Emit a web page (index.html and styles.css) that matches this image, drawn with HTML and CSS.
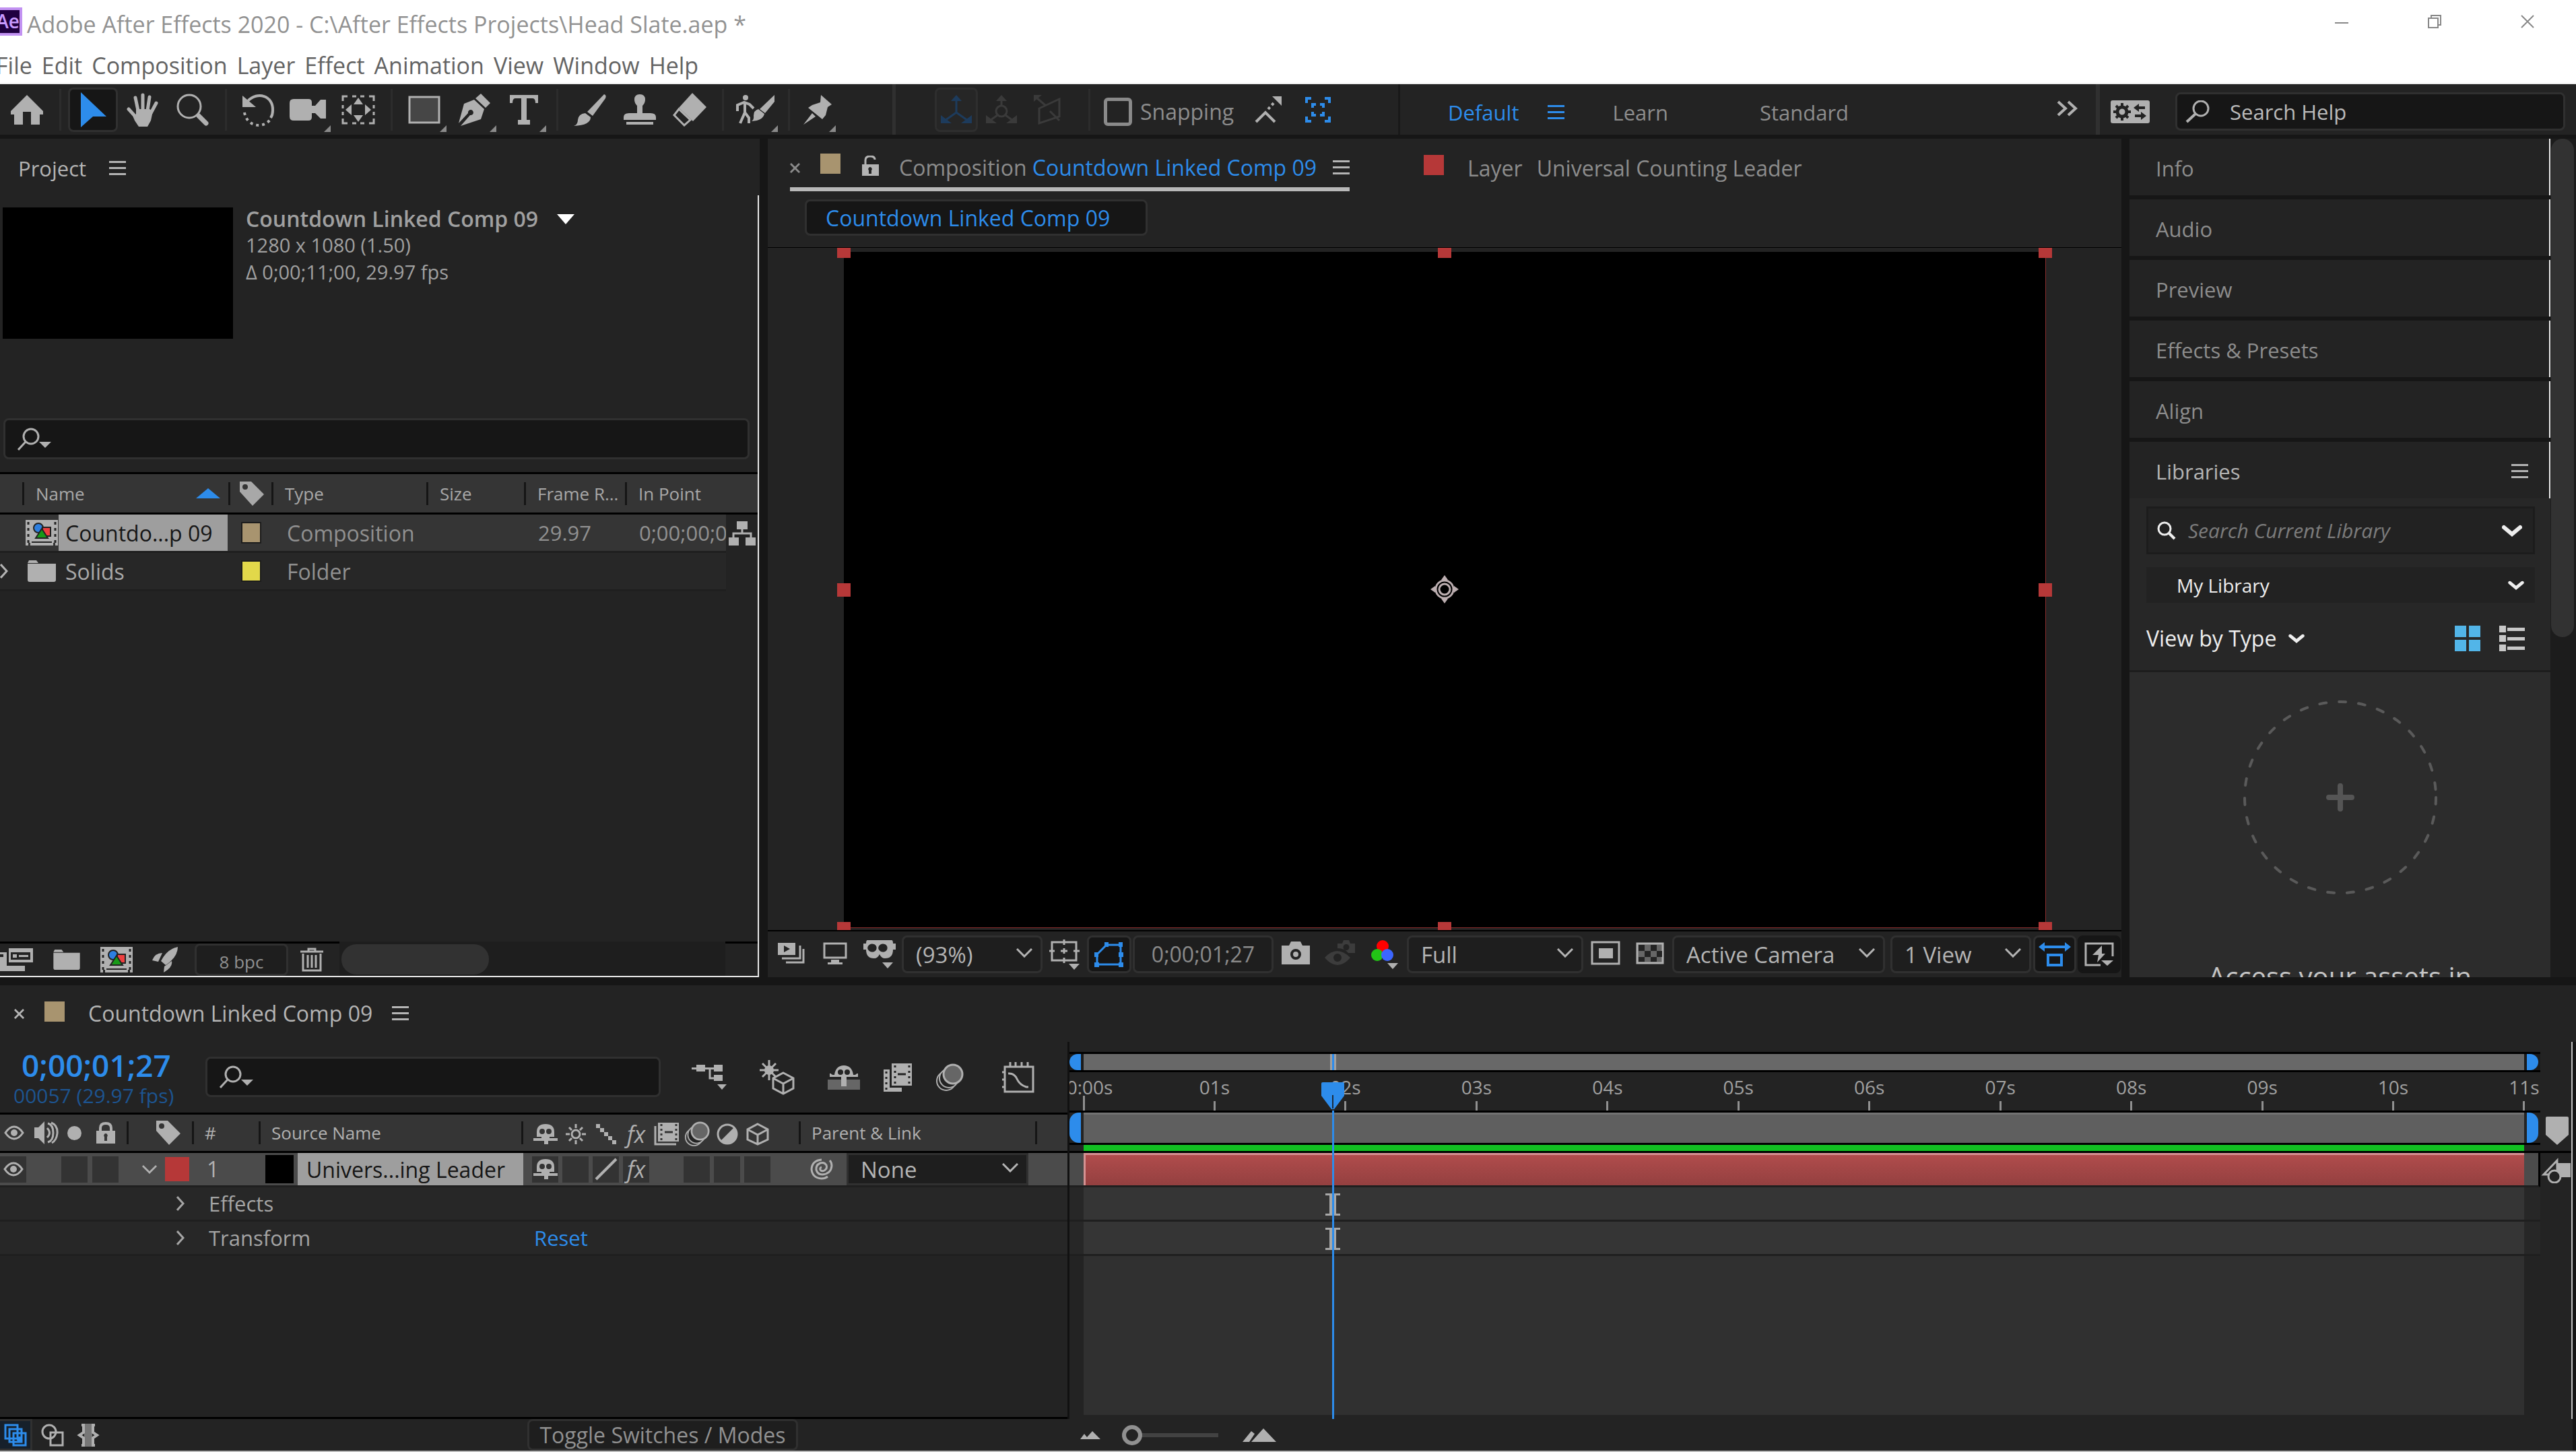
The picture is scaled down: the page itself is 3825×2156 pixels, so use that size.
FILE: index.html
```html
<!DOCTYPE html>
<html lang="en">
<head>
<meta charset="utf-8">
<title>Adobe After Effects 2020</title>
<link rel="stylesheet" href="styles.css">
</head>
<body>
<svg class="sprite" aria-hidden="true">
  <symbol id="home" viewBox="0 0 48 44"><path fill="currentColor" d="M24 0 48 24v5h-5v15H30V25H18v19H5V29H0v-5z"/></symbol>
  <symbol id="select" viewBox="0 0 38 52"><path fill="#2d8ceb" d="M0 0 38 36H18L0 52z"/></symbol>
  <symbol id="hand" viewBox="0 0 48 50"><path fill="none" stroke="currentColor" stroke-width="5" stroke-linecap="round" d="M17 26 13 7M24 25V3M31 26l3-20M36 30l8-15M13 35 3 24"/><path fill="currentColor" d="M14 24h20l5 3-3 14-5 9H18l-6-9-5-12 7 3z"/></symbol>
  <symbol id="zoom" viewBox="0 0 50 50"><circle cx="20" cy="20" r="17" fill="none" stroke="currentColor" stroke-width="3"/><path stroke="currentColor" stroke-width="7" stroke-linecap="round" d="m34 34 11 11"/></symbol>
  <symbol id="rotate" viewBox="0 0 48 50"><path fill="none" stroke="currentColor" stroke-width="4" d="M8 12C22-3 46 4 45 26c0 5-1 8-3 11"/><path fill="currentColor" d="M0 4v17h20z"/><path fill="none" stroke="currentColor" stroke-width="4" stroke-dasharray="4 5" d="M3 29c3 20 26 25 38 11"/></symbol>
  <symbol id="camera" viewBox="0 0 56 36"><path fill="currentColor" d="M6 2h22q5 0 5 5v5h5l8-9h8v28h-8l-8-8h-5v6q0 5-5 5H6q-6 0-6-6V8q0-6 6-6z"/></symbol>
  <symbol id="panbehind" viewBox="0 0 50 44"><path fill="none" stroke="currentColor" stroke-width="3" d="M2 9V2h7M41 2h7v7M48 35v7h-7M9 42H2v-7M16 2h6M28 2h6M16 42h6M28 42h6M2 15v5M2 25v5M48 15v5M48 25v5"/><path fill="currentColor" d="m25 4 7 10H18zM25 40l7-10H18zM6 22l9-8v16zM44 22l-9-8v16z"/></symbol>
  <symbol id="rect" viewBox="0 0 48 42"><path fill="#464646" stroke="currentColor" stroke-width="3" d="M2 2h44v38H2z"/></symbol>
  <symbol id="pen" viewBox="0 0 48 48"><path fill="currentColor" d="m34 0 14 14-7 7-15-14zM24 9l15 14-5 15L4 48l14-16a4 4 0 1 0-3-3L1 44l8-29z"/></symbol>
  <symbol id="type" viewBox="0 0 42 44"><path fill="currentColor" d="M0 0h42v12h-4q0-7-4-7h-9v32h5v7H12v-7h5V5H8q-4 0-4 7H0z"/></symbol>
  <symbol id="brush" viewBox="0 0 48 48"><path fill="currentColor" d="M45 1q4 1 2 6L28 33l-8-6zM17 29l8 6q0 12-25 13 6-2 6-9 1-9 11-10z"/></symbol>
  <symbol id="stamp" viewBox="0 0 48 46"><path fill="currentColor" d="M24 0q8 0 8 8 0 5-4 9v11h12q8 0 8 6v4H0v-4q0-6 8-6h12V17q-4-4-4-9 0-8 8-8zM4 41h40v4H4z"/></symbol>
  <symbol id="eraser" viewBox="0 0 50 50"><path fill="currentColor" d="m29 0 21 21-20 21L9 22z"/><path fill="none" stroke="currentColor" stroke-width="3" d="M9 24 2 33l15 15 9-8z"/></symbol>
  <symbol id="roto" viewBox="0 0 58 44"><circle cx="14" cy="4" r="4" fill="currentColor"/><path fill="none" stroke="currentColor" stroke-width="4" d="M2 24v-9l10-4 8 3 6 6M13 12v14l-7 16M13 26l6 8v8"/><path fill="currentColor" d="M57 0v10L43 27l-8-6zM33 21l9 7q-2 10-19 11 4-3 3-8 0-8 7-10z"/></symbol>
  <symbol id="pin" viewBox="0 0 42 44"><path fill="currentColor" d="m26 0 16 14-6 4-3 12-5 6L7 19l6-4 12-4zM13 27l5 5L0 44z"/></symbol>
  <symbol id="corner" viewBox="0 0 10 10"><path fill="currentColor" d="M10 0v10H0z"/></symbol>
  <symbol id="axis" viewBox="0 0 46 44"><path fill="none" stroke="currentColor" stroke-width="3" d="M23 4v22M23 26 6 38M23 26l17 12"/><path fill="currentColor" d="m23 0 8 9H15zM0 30v12h16zM46 30v12H30z"/></symbol>
  <symbol id="axis2" viewBox="0 0 46 44"><circle cx="23" cy="24" r="8" fill="none" stroke="currentColor" stroke-width="3"/><path fill="none" stroke="currentColor" stroke-width="3" d="M23 4v12M17 30 6 38M29 30l11 8"/><path fill="currentColor" d="m23 0 8 9H15zM0 30v12h16zM46 30v12H30z"/></symbol>
  <symbol id="axis3" viewBox="0 0 42 44"><path fill="none" stroke="currentColor" stroke-width="3" d="M4 4l14 12M8 20 38 6v26L8 42zM24 24l14 14"/><path fill="currentColor" d="M0 0h12L0 10z"/></symbol>
  <symbol id="snap" viewBox="0 0 40 40"><path fill="none" stroke="currentColor" stroke-width="4" d="M2 38l14-14 14 14"/><path fill="none" stroke="currentColor" stroke-width="4" stroke-dasharray="4 4" d="m20 19 10-11"/><path fill="currentColor" d="M26 0h14v14z"/></symbol>
  <symbol id="snapbox" viewBox="0 0 38 38"><path fill="none" stroke="currentColor" stroke-width="4" d="M2 9V2h7M29 2h7v7M36 29v7h-7M9 36H2v-7M11 16v-5h5M22 11h5v5M27 22v5h-5M16 27h-5v-5"/></symbol>
  <symbol id="menu" viewBox="0 0 25 22"><path fill="currentColor" d="M0 0h25v3H0zM0 9h25v3H0zM0 18h25v3H0z"/></symbol>
  <symbol id="more" viewBox="0 0 32 24"><path fill="none" stroke="currentColor" stroke-width="4" d="m2 2 11 10L2 22M17 2l11 10-11 10"/></symbol>
  <symbol id="sync" viewBox="0 0 58 34"><rect width="58" height="34" rx="3" fill="currentColor"/><circle cx="17" cy="17" r="7" fill="none" stroke="#232323" stroke-width="5"/><path stroke="#232323" stroke-width="4" d="M17 4v5M17 25v5M4 17h5M25 17h5M8 8l3 3M23 23l3 3M26 8l-3 3M11 23l-3 3"/><path fill="#232323" d="m34 11 8-6v4h9v4h-9v4zM53 23l-8-6v4h-9v4h9v4z"/></symbol>
  <symbol id="find" viewBox="0 0 36 34"><circle cx="23" cy="12" r="11" fill="none" stroke="currentColor" stroke-width="3"/><path stroke="currentColor" stroke-width="4" d="M15 20 2 32"/></symbol>
  <symbol id="finddrop" viewBox="0 0 50 34"><circle cx="20" cy="13" r="11" fill="none" stroke="currentColor" stroke-width="3"/><path stroke="currentColor" stroke-width="3" d="M12 21 1 33"/><path fill="currentColor" d="M32 21h18l-9 9z"/></symbol>
  <symbol id="lens" viewBox="0 0 28 28"><circle cx="11" cy="11" r="9" fill="none" stroke="currentColor" stroke-width="3"/><path stroke="currentColor" stroke-width="4" d="m18 18 8 8"/></symbol>
  <symbol id="chev" viewBox="0 0 24 14"><path fill="none" stroke="currentColor" stroke-width="3" d="m1 1 11 11L23 1"/></symbol>
  <symbol id="chevbold" viewBox="0 0 30 18"><path fill="none" stroke="currentColor" stroke-width="6" stroke-linecap="round" d="m3 4 12 10L27 4"/></symbol>
  <symbol id="chevright" viewBox="0 0 12 22"><path fill="none" stroke="currentColor" stroke-width="3" d="m1 1 9 10-9 10"/></symbol>
  <symbol id="close" viewBox="0 0 16 16"><path stroke="currentColor" stroke-width="3" d="m1 1 14 14M15 1 1 15"/></symbol>
  <symbol id="lockopen" viewBox="0 0 25 30"><path fill="currentColor" d="M0 13h25v17H0z"/><path fill="none" stroke="currentColor" stroke-width="3" d="M5 13V7q0-6 7-6t7 5"/><path fill="#232323" d="M12 17a3 3 0 0 1 2 5v5h-4v-5a3 3 0 0 1 2-5z"/></symbol>
  <symbol id="lock" viewBox="0 0 28 32"><path fill="currentColor" d="M0 13h28v19H0z"/><path fill="none" stroke="currentColor" stroke-width="4" d="M6 14V9q0-7 8-7t8 7v5"/><path fill="#353535" d="M14 17a3 3 0 0 1 2 5v6h-4v-6a3 3 0 0 1 2-5z"/></symbol>
  <symbol id="tag" viewBox="0 0 36 36"><path fill="currentColor" fill-rule="evenodd" d="M0 0h17l19 19-17 17L0 15zM8 4a4 4 0 1 0 0 8 4 4 0 0 0 0-8z"/></symbol>
  <symbol id="comp" viewBox="0 0 48 38"><path fill="currentColor" d="M0 0h48v38h-4v-4h-3v4H7v-4H4v4H0z"/><path stroke="#232323" stroke-width="3" stroke-dasharray="4 5" d="M4 3v32M44 3v32"/><path stroke="#232323" stroke-width="2" d="M9 33h30"/><circle cx="19" cy="12" r="7" fill="#2d7fe0" stroke="#222" stroke-width="2"/><path fill="#ee4040" stroke="#222" stroke-width="2" d="M25 11h12v13H25z"/><path fill="#189a18" stroke="#222" stroke-width="2" d="m24 13 9 14H15z"/></symbol>
  <symbol id="folder" viewBox="0 0 42 32"><path fill="currentColor" d="M2 0h11l3 4H0zM0 5h42v24q0 3-3 3H3q-3 0-3-3z"/></symbol>
  <symbol id="flow" viewBox="0 0 40 36"><path fill="currentColor" d="M12 0h16v12H12zM0 24h15v12H0zM25 24h15v12H25z"/><path fill="none" stroke="currentColor" stroke-width="3" d="M20 12v6M7 24v-6h26v6"/></symbol>
  <symbol id="interpret" viewBox="0 0 49 34"><path fill="currentColor" fill-rule="evenodd" d="M13 0h36v21H13zM16 6v11h29V6zM19 9h6v5h-6zM28 10h14v3H28z"/><path fill="currentColor" d="M0 6h10v20h27v8H0zM0 9v4h5V9z"/></symbol>
  <symbol id="rocket" viewBox="0 0 38 38"><path fill="currentColor" d="M38 0q0 15-18 27l-7-6Q22 3 38 0zM15 9 9 22 0 20Q4 9 15 9zM29 21q2 9-12 17l1-9z"/></symbol>
  <symbol id="trash" viewBox="0 0 34 36"><path fill="none" stroke="currentColor" stroke-width="3" d="M0 6h34M12 6V2h10v4M4 9v25h26V9M11 11v19M17 11v19M23 11v19"/></symbol>
  <symbol id="previews" viewBox="0 0 40 31"><path fill="currentColor" fill-rule="evenodd" d="M0 0h26v18H0zM9 4v10l9-5z"/><path fill="none" stroke="currentColor" stroke-width="3" d="M6 23h27V4M12 29h26V9"/></symbol>
  <symbol id="monitor" viewBox="0 0 36 33"><path fill="none" stroke="currentColor" stroke-width="3" d="M2 2h32v21H2z"/><path fill="currentColor" d="M12 26h12v4h5v3H7v-3h5z"/></symbol>
  <symbol id="mask3d" viewBox="0 0 48 44"><path fill="currentColor" fill-rule="evenodd" d="M6 0h36q2 0 2 5h4v9h-4q0 13-12 13-5 0-8-6-3 6-8 6Q4 27 4 14H0V5h4q0-5 2-5zM16 6a7 6 0 1 0 0 11 6 6 0 0 0 0-11zM32 6a7 6 0 1 0 0 11 6 6 0 0 0 0-11zM28 33h16l-8 9z"/></symbol>
  <symbol id="gridopt" viewBox="0 0 46 46"><path fill="none" stroke="currentColor" stroke-width="3" d="M4 4h36v27H4zM22 0v8M22 27v8M0 17h8M36 17h9M17 17h10M22 13v8"/><path fill="currentColor" d="M29 36h16l-8 9z"/></symbol>
  <symbol id="maskpath" viewBox="0 0 44 37"><path fill="none" stroke="#2d8ceb" stroke-width="3" d="M4 33V18L18 4h21v29z"/><path fill="#2d8ceb" d="M15 0h6v7h-6zM36 0h6v7h-6zM0 15h6v7H0zM36 15h7v7h-7zM0 30h7v7H0zM36 30h7v7h-7z"/></symbol>
  <symbol id="snapshot" viewBox="0 0 42 34"><path fill="currentColor" fill-rule="evenodd" d="M0 6h11l3-6h14l3 6h11v28H0zM21 11a8 8 0 1 0 0 16 8 8 0 0 0 0-16zM21 15a4 4 0 1 1 0 8 4 4 0 0 1 0-8z"/></symbol>
  <symbol id="showsnap" viewBox="0 0 46 38"><path fill="currentColor" fill-rule="evenodd" d="M19 5h7l2-5h8l2 5h7v14H35q-5-7-16-7zM32 6a4 4 0 1 0 0 9 4 4 0 0 0 0-9zM0 26q18-20 38 0-19 22-38 0zM19 20a6 6 0 1 0 0 12 6 6 0 0 0 0-12z"/></symbol>
  <symbol id="channels" viewBox="0 0 40 44"><circle cx="17" cy="9" r="9" fill="#f00"/><circle cx="9" cy="22" r="9" fill="#22c316"/><circle cx="24" cy="22" r="9" fill="#3c66ff"/><path fill="currentColor" d="M24 34h16l-8 9z"/></symbol>
  <symbol id="roi" viewBox="0 0 44 36"><path fill="none" stroke="currentColor" stroke-width="3" d="M2 2h40v32H2z"/><path fill="currentColor" d="M12 11h21v15H12z"/></symbol>
  <symbol id="checker" viewBox="0 0 42 33"><path fill="#666" stroke="currentColor" stroke-width="3" d="M2 2h38v29H2z"/><path fill="#232323" d="M4 4h9v9H4zM22 4h9v9h-9zM13 13h9v9h-9zM31 13h8v9h-8zM4 22h9v7H4zM22 22h9v7h-9z"/></symbol>
  <symbol id="par" viewBox="0 0 48 36"><path fill="none" stroke="#2d8ceb" stroke-width="4" d="M6 7h36M14 19h20v15H14z"/><path fill="#2d8ceb" d="M0 7 9 0v14zM48 7l-9-7v14z"/></symbol>
  <symbol id="fast" viewBox="0 0 44 36"><path fill="none" stroke="currentColor" stroke-width="3" d="M24 34H2V2h40v19"/><path fill="currentColor" d="M26 5v12h5L19 30l2-11h-9zM25 27h18l-9 8z"/></symbol>
  <symbol id="tree" viewBox="0 0 52 38"><path fill="currentColor" d="M0 4h7V0h13v4h13V0h13v10H33V7H20v3H7V7H0zM33 15h13v9H33zM38 29h14l-7 8z"/><path fill="none" stroke="currentColor" stroke-width="3" d="M27 5v15h7"/></symbol>
  <symbol id="draft3d" viewBox="0 0 52 52"><path stroke="currentColor" stroke-width="3" d="M14 0v30M0 15h28M4 5l20 20M24 5 4 25"/><circle cx="14" cy="15" r="7" fill="currentColor"/><path fill="none" stroke="currentColor" stroke-width="3" d="m35 19 15 8v15l-15 8-15-8V27zM20 27l15 8 15-8M35 35v15"/></symbol>
  <symbol id="shyall" viewBox="0 0 48 36"><path fill="#666" d="M0 21h48v15H0z"/><path fill="currentColor" fill-rule="evenodd" d="M3 17V12h2q0 2 5 2Q12 0 24 0t14 14q5 0 5-2h2v5h-17v14h-8V17zM19 6a4 4 0 1 0 0 8 4 4 0 0 0 0-8zM29 6a4 4 0 1 0 0 8 4 4 0 0 0 0-8z"/></symbol>
  <symbol id="shy" viewBox="0 0 36 30"><path fill="currentColor" fill-rule="evenodd" d="M0 21h12v-2H5V12Q5 0 18 0t13 12v7h-7v2h12v4H22v5h-6v-5H0zM13 7a4 4 0 1 0 0 8 4 4 0 0 0 0-8zM23 7a4 4 0 1 0 0 8 4 4 0 0 0 0-8z"/></symbol>
  <symbol id="sun" viewBox="0 0 30 30"><circle cx="15" cy="15" r="6" fill="none" stroke="currentColor" stroke-width="3"/><path stroke="currentColor" stroke-width="3" d="M15 0v6M15 24v6M0 15h6M24 15h6M5 5l4 4M21 21l4 4M25 5l-4 4M9 21l-4 4"/></symbol>
  <symbol id="quality" viewBox="0 0 30 30"><path fill="currentColor" d="M0 0h6v6H0zM6 6h6v6H6zM12 12h6v6h-6zM18 18h6v6h-6zM24 24h6v6h-6z"/></symbol>
  <symbol id="slash" viewBox="0 0 34 34"><path stroke="currentColor" stroke-width="4" d="M2 32 32 2"/></symbol>
  <symbol id="film" viewBox="0 0 38 34"><path fill="none" stroke="currentColor" stroke-width="3" d="M2 5v27h31"/><path fill="currentColor" d="M6 0h31v28H6z"/><path stroke="#353535" stroke-width="3" stroke-dasharray="3 4" d="M11 2v25M33 2v25"/><path stroke="#353535" stroke-width="3" d="M16 14h12"/></symbol>
  <symbol id="blend" viewBox="0 0 42 42"><path fill="currentColor" d="M12 0h30v33H12zM0 9h9v27h18v6H0z"/><path stroke="#232323" stroke-width="3" stroke-dasharray="3 5" d="M17 3v28M38 3v28M4 12v28"/><path stroke="#232323" stroke-width="3" d="M21 16h12"/></symbol>
  <symbol id="mblur" viewBox="0 0 42 42"><circle cx="16" cy="26" r="14" fill="none" stroke="currentColor" stroke-width="2"/><circle cx="20" cy="22" r="14" fill="#232323" stroke="currentColor" stroke-width="2"/><circle cx="26" cy="16" r="14" fill="#666" stroke="currentColor" stroke-width="3"/></symbol>
  <symbol id="graph" viewBox="0 0 48 46"><path fill="none" stroke="currentColor" stroke-width="3" d="M4 7h42v37H4zM9 17q9-1 13 8t14 12h3M12 0v6M20 0v6M29 0v6M38 0v6M0 15h4M0 26h4M0 37h4"/></symbol>
  <symbol id="eye" viewBox="0 0 30 22"><path fill="none" stroke="currentColor" stroke-width="3" d="M2 11Q8 2 15 2t13 9q-6 9-13 9T2 11z"/><circle cx="15" cy="11" r="5" fill="currentColor"/></symbol>
  <symbol id="speaker" viewBox="0 0 36 34"><path fill="currentColor" d="M0 9h6l9-9v34l-9-9H0z"/><path fill="none" stroke="currentColor" stroke-width="3" d="M19 10q7 7 0 14M20 3q8 2 8 14t-8 14M25 2q10 4 9 16-1 10-8 14"/></symbol>
  <symbol id="adjust" viewBox="0 0 32 32"><circle cx="16" cy="16" r="14" fill="none" stroke="currentColor" stroke-width="3"/><path fill="currentColor" d="M26 6A14 14 0 1 1 6 26z"/></symbol>
  <symbol id="cube" viewBox="0 0 34 34"><path fill="none" stroke="currentColor" stroke-width="3" d="m17 2 15 8v15l-15 7-15-7V10zM2 10l15 8 15-8M17 18v14"/></symbol>
  <symbol id="spiral" viewBox="0 0 36 32"><path fill="none" stroke="currentColor" stroke-width="3" d="M17 13q-3 1-2 4 2 3 6 1 5-3 3-8-3-5-9-3-7 3-6 10 2 7 9 7 13-1 14-13 0-5-3-8M17 2Q3 3 2 16q1 13 15 14 5 0 9-3"/></symbol>
  <symbol id="marker" viewBox="0 0 34 42"><path fill="currentColor" d="M2 0h30q2 0 2 2v25L17 42 0 27V2q0-2 2-2z"/></symbol>
  <symbol id="compbtn" viewBox="0 0 44 38"><path fill="currentColor" d="M24 8h20v21H24z"/><path fill="#232323" stroke="currentColor" stroke-width="3" d="M24 4v21H4z"/><circle cx="20" cy="28" r="9" fill="#232323" stroke="currentColor" stroke-width="3"/></symbol>
  <symbol id="ibeam" viewBox="0 0 22 33"><path fill="currentColor" d="M0 0h22v3h-6v27h6v3H0v-3h6V3H0z"/></symbol>
  <symbol id="panes" viewBox="0 0 34 34"><path fill="#16202b" stroke="#2d8ceb" stroke-width="3" d="M2 2h18v20H2zM8 8h18v19H8zM14 14h18v18H14z"/><circle cx="23" cy="23" r="4" fill="#2d8ceb"/></symbol>
  <symbol id="modes" viewBox="0 0 34 34"><circle cx="12" cy="12" r="10" fill="none" stroke="currentColor" stroke-width="3"/><path fill="none" stroke="currentColor" stroke-width="3" d="M14 13h18v19H14z"/></symbol>
  <symbol id="inout" viewBox="0 0 36 34"><path fill="#777" d="M12 0h12v34H12z"/><path fill="none" stroke="currentColor" stroke-width="4" d="M8 2h3v11l-6 4 6 4v11H8M28 2h-3v11l6 4-6 4v11h3"/></symbol>
  <symbol id="hillsmall" viewBox="0 0 30 12"><path fill="currentColor" d="m0 12 6-8 4 5 8-9 12 12z"/></symbol>
  <symbol id="hillbig" viewBox="0 0 50 20"><path fill="currentColor" d="M0 20 13 4l5 4-8 12zM13 20 31 0l19 20z"/></symbol>
  <symbol id="gridview" viewBox="0 0 38 38"><path fill="#52b5e8" d="M0 0h17v17H0zM21 0h17v17H21zM0 21h17v17H0zM21 21h17v17H21z"/></symbol>
  <symbol id="listview" viewBox="0 0 38 38"><path fill="#c8c8c8" d="M0 0h10v10H0zM12 3h26v5H12zM0 14h10v10H0zM12 17h26v5H12zM0 28h10v10H0zM12 31h26v5H12z"/></symbol>
  <symbol id="anchor" viewBox="0 0 42 42"><circle cx="21" cy="21" r="13" fill="none" stroke="#bcaeb0" stroke-width="3"/><circle cx="21" cy="21" r="8" fill="none" stroke="#bcaeb0" stroke-width="3"/><path fill="#bcaeb0" d="m21 0 5 7H16zM21 42l5-7H16zM0 21l7-5v10zM42 21l-7-5v10z"/></symbol>
  <symbol id="dropzone" viewBox="0 0 290 290"><circle cx="145" cy="145" r="142" fill="none" stroke="#5a5a5a" stroke-width="4" stroke-linecap="round" stroke-dasharray="10 19"/><path stroke="#555" stroke-width="8" stroke-linecap="round" d="M128 145h34M145 128v34"/></symbol>
</svg>

<div class="app">
  <header class="window">
    <div class="titlebar">
      <span class="logo">Ae</span>
      <h1>Adobe After Effects 2020 - C:\After Effects Projects\Head Slate.aep *</h1>
      <div class="winbtns">
        <button aria-label="Minimize"><svg width="20" height="20"><path d="M0 12h20" stroke="#888" stroke-width="2"/></svg></button>
        <button aria-label="Restore"><svg width="20" height="20"><path d="M1 5h14v14H1zM5 5V1h14v14h-4" fill="none" stroke="#888" stroke-width="2"/></svg></button>
        <button aria-label="Close"><svg width="20" height="20"><path d="m1 1 18 18M19 1 1 19" stroke="#888" stroke-width="2"/></svg></button>
      </div>
    </div>
    <nav class="menubar">
      <button>File</button><button>Edit</button><button>Composition</button><button>Layer</button><button>Effect</button><button>Animation</button><button>View</button><button>Window</button><button>Help</button>
    </nav>
  </header>

  <div class="toolbar">
    <div class="tools">
      <button class="tool" aria-label="Home"><svg width="48" height="44"><use href="#home"/></svg></button>
      <i class="sep"></i>
      <button class="tool active" aria-label="Selection"><svg width="38" height="52"><use href="#select"/></svg></button>
      <button class="tool" aria-label="Hand"><svg width="48" height="50"><use href="#hand"/></svg></button>
      <button class="tool" aria-label="Zoom"><svg width="50" height="50"><use href="#zoom"/></svg></button>
      <i class="sep"></i>
      <button class="tool" aria-label="Rotate"><svg width="48" height="50"><use href="#rotate"/></svg></button>
      <button class="tool" aria-label="Camera"><svg width="56" height="36"><use href="#camera"/></svg><svg class="corner" width="10" height="10"><use href="#corner"/></svg></button>
      <button class="tool" aria-label="Pan behind"><svg width="50" height="44"><use href="#panbehind"/></svg></button>
      <i class="sep"></i>
      <button class="tool" aria-label="Rectangle"><svg width="48" height="42"><use href="#rect"/></svg><svg class="corner" width="10" height="10"><use href="#corner"/></svg></button>
      <button class="tool" aria-label="Pen"><svg width="48" height="48"><use href="#pen"/></svg><svg class="corner" width="10" height="10"><use href="#corner"/></svg></button>
      <button class="tool" aria-label="Type"><svg width="42" height="44"><use href="#type"/></svg><svg class="corner" width="10" height="10"><use href="#corner"/></svg></button>
      <i class="sep"></i>
      <button class="tool" aria-label="Brush"><svg width="48" height="48"><use href="#brush"/></svg></button>
      <button class="tool" aria-label="Clone stamp"><svg width="48" height="46"><use href="#stamp"/></svg></button>
      <button class="tool" aria-label="Eraser"><svg width="50" height="50"><use href="#eraser"/></svg></button>
      <i class="sep"></i>
      <button class="tool" aria-label="Roto brush"><svg width="58" height="44"><use href="#roto"/></svg><svg class="corner" width="10" height="10"><use href="#corner"/></svg></button>
      <i class="sep"></i>
      <button class="tool narrow" aria-label="Puppet pin"><svg width="42" height="44"><use href="#pin"/></svg><svg class="corner" width="10" height="10"><use href="#corner"/></svg></button>
    </div>
    <div class="options">
      <button class="tool axis on" aria-label="Local axis"><svg width="46" height="44"><use href="#axis"/></svg></button>
      <button class="tool axis" aria-label="World axis"><svg width="46" height="44"><use href="#axis2"/></svg></button>
      <button class="tool axis" aria-label="View axis"><svg width="42" height="44"><use href="#axis3"/></svg></button>
      <i class="sep"></i>
      <label class="check"><input type="checkbox">Snapping</label>
      <button class="tool" aria-label="Snap to edges"><svg width="40" height="40"><use href="#snap"/></svg></button>
      <button class="tool blue" aria-label="Snap to features"><svg width="38" height="38"><use href="#snapbox"/></svg></button>
    </div>
    <nav class="workspaces">
      <button class="blue">Default</button>
      <button class="blue ham" aria-label="Workspace menu"><svg width="25" height="22"><use href="#menu"/></svg></button>
      <button>Learn</button>
      <button class="std">Standard</button>
      <button class="overflow" aria-label="More workspaces"><svg width="32" height="24"><use href="#more"/></svg></button>
    </nav>
    <div class="help">
      <button aria-label="Sync settings"><svg width="58" height="34"><use href="#sync"/></svg></button>
      <label class="field"><svg width="36" height="34"><use href="#find"/></svg><input type="search" placeholder="Search Help" aria-label="Search Help"></label>
    </div>
  </div>

  <div class="workspace">
    <section class="panel project">
      <div class="tabs"><h2>Project</h2><button aria-label="Panel menu"><svg width="25" height="22"><use href="#menu"/></svg></button></div>
      <div class="projbody">
        <div class="info">
          <div class="thumb"></div>
          <div class="meta">
            <h3>Countdown Linked Comp 09 <svg width="26" height="15"><path d="M0 0h26L13 15z" fill="#fff"/></svg></h3>
            <p>1280 x 1080 (1.50)</p>
            <p>Δ 0;00;11;00, 29.97 fps</p>
          </div>
        </div>
        <label class="field search"><svg width="50" height="34"><use href="#finddrop"/></svg><input type="search" aria-label="Search project"></label>
        <table class="items">
          <colgroup><col class="c0"><col class="c1"><col class="c2"><col class="c3"><col class="c4"><col class="c5"><col class="c6"><col></colgroup>
          <thead>
            <tr><th><span>&nbsp;</span></th><th><span class="namehead">Name <svg width="36" height="15"><path d="M0 15h36L18 0z" fill="#2d8ceb"/></svg></span></th><th><span class="taghead"><svg width="36" height="36"><use href="#tag"/></svg></span></th><th><span>Type</span></th><th><span>Size</span></th><th><span>Frame R...</span></th><th colspan="2"><span class="last">In Point</span></th></tr>
          </thead>
          <tbody>
            <tr class="sel"><td></td><td><div class="name"><svg width="48" height="38"><use href="#comp"/></svg><b>Countdo...p 09</b></div></td><td><i class="sw tan"></i></td><td>Composition</td><td></td><td class="num">29.97</td><td class="num clip">0;00;00;00</td><td class="flow"><svg width="40" height="36"><use href="#flow"/></svg></td></tr>
            <tr><td class="tw"><svg width="12" height="22"><use href="#chevright"/></svg></td><td><div class="name"><svg width="42" height="32"><use href="#folder"/></svg><b>Solids</b></div></td><td><i class="sw yellow"></i></td><td>Folder</td><td></td><td></td><td></td><td class="flow"></td></tr>
          </tbody>
        </table>
        <div class="projfoot">
          <button class="f1" aria-label="Interpret footage"><svg width="49" height="34"><use href="#interpret"/></svg></button>
          <button class="f2" aria-label="New folder"><svg width="40" height="30"><use href="#folder"/></svg></button>
          <button class="f3" aria-label="New composition"><svg width="50" height="38"><use href="#comp"/></svg></button>
          <button class="f4" aria-label="Project settings"><svg width="38" height="38"><use href="#rocket"/></svg></button>
          <button class="bpc">8 bpc</button>
          <button class="f5" aria-label="Delete"><svg width="34" height="36"><use href="#trash"/></svg></button>
          <div class="hscroll"><i></i></div>
        </div>
      </div>
    </section>

    <section class="panel composition">
      <div class="comptabs">
        <div class="tab current">
          <button aria-label="Close tab"><svg width="15" height="15"><use href="#close"/></svg></button>
          <i class="chip tan"></i>
          <svg class="bright" width="25" height="30"><use href="#lockopen"/></svg>
          <span class="kind">Composition <em>Countdown Linked Comp 09</em></span>
          <button class="bright" aria-label="Panel menu"><svg width="25" height="22"><use href="#menu"/></svg></button>
        </div>
        <div class="tab"><i class="chip red"></i><span>Layer</span><span>Universal Counting Leader</span></div>
      </div>
      <div class="crumbs"><button>Countdown Linked Comp 09</button></div>
      <div class="viewer">
        <div class="canvas">
          <i class="h tl"></i><i class="h tc"></i><i class="h tr"></i><i class="h ml"></i><i class="h mr"></i><i class="h bl"></i><i class="h bc"></i><i class="h br"></i>
          <svg class="anchor" width="42" height="42"><use href="#anchor"/></svg>
        </div>
      </div>
      <div class="compfoot">
        <button class="ic w62" aria-label="Always preview this view"><svg width="40" height="31"><use href="#previews"/></svg></button>
        <button class="ic w66" aria-label="Primary viewer"><svg width="36" height="33"><use href="#monitor"/></svg></button>
        <button class="ic w66" aria-label="VR"><svg class="low" width="48" height="44"><use href="#mask3d"/></svg></button>
        <div class="drop w208"><select aria-label="Magnification"><option>(93%)</option></select><svg width="24" height="14"><use href="#chev"/></svg></div>
        <button class="ic w66" aria-label="Grid and guides"><svg class="low" width="46" height="46"><use href="#gridopt"/></svg></button>
        <button class="box w66" aria-label="Mask visibility"><svg width="44" height="37"><use href="#maskpath"/></svg></button>
        <button class="box time">0;00;01;27</button>
        <button class="ic w66" aria-label="Take snapshot"><svg width="42" height="34"><use href="#snapshot"/></svg></button>
        <button class="ic w66 dim" aria-label="Show snapshot"><svg width="46" height="38"><use href="#showsnap"/></svg></button>
        <button class="ic w66" aria-label="Channels"><svg class="low" width="40" height="44"><use href="#channels"/></svg></button>
        <div class="drop w260"><select aria-label="Resolution"><option>Full</option></select><svg width="24" height="14"><use href="#chev"/></svg></div>
        <button class="ic w66" aria-label="Region of interest"><svg width="44" height="36"><use href="#roi"/></svg></button>
        <button class="ic w66" aria-label="Transparency grid"><svg width="42" height="33"><use href="#checker"/></svg></button>
        <div class="drop w316"><select aria-label="3D view"><option>Active Camera</option></select><svg width="24" height="14"><use href="#chev"/></svg></div>
        <div class="drop w208 gap"><select aria-label="View layout"><option>1 View</option></select><svg width="24" height="14"><use href="#chev"/></svg></div>
        <button class="box w62 gap2" aria-label="Pixel aspect ratio"><svg width="48" height="36"><use href="#par"/></svg></button>
        <button class="box w62 plain" aria-label="Fast previews"><svg width="44" height="36"><use href="#fast"/></svg></button>
      </div>
    </section>

    <aside class="side">
      <div class="stack">
        <button class="acc">Info</button>
        <button class="acc">Audio</button>
        <button class="acc">Preview</button>
        <button class="acc">Effects &amp; Presets</button>
        <button class="acc">Align</button>
        <div class="acc lib"><h2>Libraries</h2><button aria-label="Panel menu"><svg width="25" height="22"><use href="#menu"/></svg></button></div>
        <div class="libctl">
          <label class="libsearch"><svg width="28" height="28"><use href="#lens"/></svg><input type="search" placeholder="Search Current Library" aria-label="Search Current Library"><svg width="30" height="18"><use href="#chevbold"/></svg></label>
          <div class="libpick"><select aria-label="Library"><option>My Library</option></select><svg width="24" height="14"><use href="#chevbold"/></svg></div>
          <div class="libview"><button>View by Type <svg width="24" height="14"><use href="#chevbold"/></svg></button><span class="grow"></span><button aria-label="Grid view"><svg width="38" height="38"><use href="#gridview"/></svg></button><button aria-label="List view"><svg width="38" height="38"><use href="#listview"/></svg></button></div>
        </div>
        <div class="drops"><svg width="290" height="290"><use href="#dropzone"/></svg><p>Access your assets in</p></div>
      </div>
      <div class="vscroll"><i></i></div>
    </aside>
  </div>

  <section class="timeline">
    <div class="tltabs">
      <button aria-label="Close tab"><svg width="15" height="15"><use href="#close"/></svg></button>
      <i class="chip tan"></i>
      <h2>Countdown Linked Comp 09</h2>
      <button class="bright" aria-label="Panel menu"><svg width="25" height="22"><use href="#menu"/></svg></button>
    </div>
    <div class="tlmain">
      <div class="outline">
        <div class="tlctl">
          <div class="clock"><strong>0;00;01;27</strong><small>00057 (29.97 fps)</small></div>
          <label class="field"><svg width="50" height="34"><use href="#finddrop"/></svg><input type="search" aria-label="Search layers"></label>
          <button class="k1" aria-label="Mini-flowchart"><svg width="52" height="38"><use href="#tree"/></svg></button>
          <button class="k2" aria-label="Draft 3D"><svg width="52" height="52"><use href="#draft3d"/></svg></button>
          <button class="k2" aria-label="Hide shy layers"><svg width="48" height="36"><use href="#shyall"/></svg></button>
          <button class="k3" aria-label="Frame blending"><svg width="42" height="42"><use href="#blend"/></svg></button>
          <button class="k3" aria-label="Motion blur"><svg width="42" height="42"><use href="#mblur"/></svg></button>
          <button class="k4" aria-label="Graph editor"><svg width="48" height="46"><use href="#graph"/></svg></button>
        </div>
        <div class="lrow lhead">
          <span class="hc n"><svg width="30" height="22"><use href="#eye"/></svg></span>
          <span class="hc n"><svg width="36" height="34"><use href="#speaker"/></svg></span>
          <span class="hc n"><i class="dot"></i></span>
          <span class="hc n s"><svg width="28" height="32"><use href="#lock"/></svg></span>
          <span class="hc s tagc"><svg width="36" height="36"><use href="#tag"/></svg></span>
          <span class="hc s">#</span>
          <span class="hc s">Source Name</span>
          <span class="hc s switches"><svg width="36" height="30"><use href="#shy"/></svg><svg width="30" height="30"><use href="#sun"/></svg><svg width="30" height="30"><use href="#quality"/></svg><i class="fx">fx</i><svg width="38" height="34"><use href="#film"/></svg><svg width="38" height="38"><use href="#mblur"/></svg><svg width="32" height="32"><use href="#adjust"/></svg><svg width="34" height="34"><use href="#cube"/></svg></span>
          <span class="hc s">Parent &amp; Link</span>
          <span class="hc"></span>
        </div>
        <div class="lrow layer">
          <span class="av"><svg width="30" height="22"><use href="#eye"/></svg></span><span></span><span class="av"></span><span class="av"></span>
          <span class="twirl"><svg width="22" height="13"><use href="#chev"/></svg><i class="red"></i></span>
          <span class="idx">1</span>
          <span class="src"><i></i><b>Univers...ing Leader</b></span>
          <span class="switches cells"><i><svg width="36" height="30"><use href="#shy"/></svg></i><i></i><i><svg width="34" height="34"><use href="#slash"/></svg></i><i class="fx">fx</i><i class="none"></i><i></i><i></i><i></i></span>
          <span class="parent"><svg width="36" height="32"><use href="#spiral"/></svg><span class="drop"><select aria-label="Parent"><option>None</option></select><svg width="24" height="14"><use href="#chev"/></svg></span></span>
          <span></span>
        </div>
        <div class="prop"><button><svg width="12" height="22"><use href="#chevright"/></svg><span>Effects</span></button></div>
        <div class="prop"><button><svg width="12" height="22"><use href="#chevright"/></svg><span>Transform</span></button><a href="#reset">Reset</a></div>
      </div>
      <div class="tracks">
        <div class="navig"><i class="cap l"></i><i class="bar"></i><i class="cap r"></i></div>
        <div class="ruler">
          <span class="zero"><b>0:00s</b></span><span><b>01s</b></span><span><b>02s</b></span><span><b>03s</b></span><span><b>04s</b></span><span><b>05s</b></span><span><b>06s</b></span><span><b>07s</b></span><span><b>08s</b></span><span><b>09s</b></span><span><b>10s</b></span><span><b>11s</b></span>
        </div>
        <div class="work"><i class="cap l"></i><i class="bar"></i><i class="cap r"></i></div>
        <div class="cache"><i></i></div>
        <div class="clip"><i></i></div>
        <div class="lane"><i></i></div>
        <div class="lane"><i></i></div>
        <div class="empty"><i></i></div>
        <div class="overlay"><div class="playhead" style="left:17.3%">
          <i class="navmark"></i>
          <svg class="head" width="34" height="40"><path fill="#2d8ceb" d="M2 0h30q2 0 2 2v18L19 40h-4L0 20V2q0-2 2-2z"/><path stroke="#1b2a3a" stroke-width="2" d="M17 19v20"/></svg>
          <svg class="beam b1" width="22" height="33"><use href="#ibeam"/></svg>
          <svg class="beam b2" width="22" height="33"><use href="#ibeam"/></svg>
          <i class="line"></i>
        </div></div>
      </div>
      <div class="gutter">
        <div class="g1"><svg width="34" height="42"><use href="#marker"/></svg></div>
        <div class="g2"><svg width="44" height="38"><use href="#compbtn"/></svg></div>
      </div>
    </div>
    <div class="tlfoot">
      <button class="pane" aria-label="Layer switches"><svg width="34" height="34"><use href="#panes"/></svg></button>
      <button class="md" aria-label="Transfer controls"><svg width="34" height="34"><use href="#modes"/></svg></button>
      <button class="io" aria-label="In and out"><svg width="36" height="34"><use href="#inout"/></svg></button>
      <button class="toggle">Toggle Switches / Modes</button>
      <svg class="hs" width="30" height="12"><use href="#hillsmall"/></svg>
      <input type="range" min="0" max="100" value="0" aria-label="Timeline zoom">
      <svg width="50" height="20"><use href="#hillbig"/></svg>
    </div>
  </section>
</div>
</body>
</html>
```
FILE: styles.css
```css
* { box-sizing: border-box; }
html, body { margin: 0; height: 100%; }
body {
  background: #161616;
  color: #b4b4b4;
  font: 31px/40px "Open Sans", "Noto Sans", sans-serif;
  overflow: hidden;
}
button, input, select { font: inherit; color: inherit; background: none; border: 0; padding: 0; margin: 0; outline: 0; border-radius: 0; }
button { display: flex; align-items: center; justify-content: center; white-space: nowrap; }
input { min-width: 0; width: 100%; }
input[type="search"] { appearance: none; }
select { appearance: none; width: 100%; }
svg { display: block; flex: none; }
h1, h2, h3, p { margin: 0; font: inherit; }
i, em { font-style: normal; }
i { display: block; }
.sprite { position: absolute; width: 0; height: 0; }
.app { display: grid; grid-template-rows: 125px 75px minmax(0, 1250fr) minmax(0, 704fr); height: 100vh; }

/* window chrome */
.window { background: #fff; color: #636363; font-size: 34px; border-bottom: 2px solid #eee; }
.titlebar { display: flex; align-items: center; height: 72px; color: #929292; }
.logo { width: 33px; height: 42px; margin: 0 7px 8px 0; background: #1f0040; border: 4px solid #c292f2; border-left: 0; color: #c99bff; font: 600 28px/32px "Open Sans", sans-serif; display: flex; justify-content: flex-end; overflow: hidden; }
.titlebar h1 { flex: 1; }
.winbtns { display: flex; margin: 0 3px 8px 0; }
.winbtns button { width: 138px; height: 60px; }
.menubar { display: flex; gap: 14px; height: 50px; margin-left: -6px; }

/* toolbar */
.toolbar { display: flex; background: #232323; color: #b0b0b0; }
.tools { display: flex; align-items: center; width: 1330px; padding-left: 3px; border-right: 5px solid #303030; }
.tool { width: 74px; height: 66px; position: relative; flex: none; }
.tool.narrow { width: 62px; }
.tool.active { background: #161616; border: 3px solid #303030; border-radius: 8px; padding-left: 2px; }
.corner { position: absolute; right: 4px; bottom: 0; color: #8a8a8a; }
.sep { width: 3px; height: 62px; background: #2c2c2c; margin: 0 10px 0 11px; flex: none; }
.options { display: flex; align-items: center; width: 749px; padding: 0 0 0 58px; border-right: 3px solid #191919; }
.axis { color: #3a3a3a; width: 69px; }
.axis.on { color: #1d3b5c; border: 3px solid #2e2e2e; border-radius: 8px; width: 64px; background: #262626; }
.options .sep { margin: 0 20px 0 26px; }
.check { display: flex; align-items: center; gap: 12px; color: #8c8c8c; padding: 6px 14px 0 0; font-size: 32px; }
.check input { appearance: none; width: 42px; height: 42px; border: 5px solid #8a8a8a; border-radius: 6px; flex: none; }
.workspaces { display: flex; align-items: center; flex: 1; padding: 14px 26px 6px 71px; color: #8c8c8c; border-right: 6px solid #303030; }
.blue { color: #2d8ceb; }
.ham { margin: 0 71px 0 43px; }
.std { margin-left: 136px; }
.overflow { margin: 0 0 12px auto; color: #b0b0b0; }
.help { display: flex; align-items: center; gap: 38px; width: 707px; padding: 6px 16px 0; }
.field { display: flex; align-items: center; flex: 1; background: #161616; border: 3px solid #303030; border-radius: 8px; color: #b0b0b0; }
.help .field { height: 57px; padding-left: 12px; gap: 30px; }
.help ::placeholder { color: #bababa; opacity: 1; }

/* workspace */
.workspace { display: grid; grid-template-columns: 1128px minmax(0, 1fr) 663px; gap: 12px; padding: 6px 0 0; min-height: 0; }
.panel { background: #232323; min-width: 0; min-height: 0; display: flex; flex-direction: column; }
.chip { width: 30px; height: 30px; flex: none; }
.tan { background: #a8946f; }
.red { background: #b63838; }
.yellow { background: #e2d84a; }
.bright { color: #b4b4b4; }

.tabs { display: flex; align-items: center; gap: 34px; height: 84px; padding: 3px 0 0 27px; flex: none; }
.projbody { flex: 1; display: flex; flex-direction: column; min-height: 0; border-right: 2px solid #e8e8e8; border-bottom: 2px solid #e8e8e8; margin-right: 1px; }
.info { display: flex; gap: 19px; padding: 16px 0 0 4px; height: 331px; }
.thumb { width: 342px; height: 195px; margin-top: 2px; background: #000; }
.meta { font-size: 29px; color: #a0a0a0; }
.meta h3 { display: flex; align-items: center; gap: 28px; font-size: 32px; font-weight: 600; line-height: 38px; }
.search { flex: none; height: 61px; margin: 0 12px 19px 5px; padding-left: 18px; gap: 10px; }
.items { table-layout: fixed; border-collapse: collapse; width: 100%; }
.c0 { width: 36px; } .c1 { width: 306px; } .c2 { width: 64px; } .c3 { width: 230px; } .c4 { width: 145px; } .c5 { width: 150px; } .c6 { width: 147px; }
.items th { height: 60px; padding: 0; background: #353535; border-top: 3px solid #000; border-bottom: 3px solid #000; font-size: 26px; font-weight: 400; text-align: left; color: #a8a8a8; }
.items th span { display: flex; align-items: center; height: 34px; padding-left: 17px; border-right: 3px solid #151515; white-space: nowrap; }
.items th .last { border: 0; }
.items th .namehead { justify-content: space-between; padding-right: 12px; }
.items th .taghead { padding-left: 14px; }
.items td { height: 57px; padding: 2px 0 0 20px; background: #272727; border-bottom: 3px solid #1f1f1f; color: #909090; font-size: 32px; white-space: nowrap; overflow: hidden; }
.items .sel td { background: #353535; }
.items td:nth-child(2) { padding: 0 4px 0 0; }
.items td:nth-child(3) { padding: 0 0 0 16px; }
.items td.tw { padding: 0; color: #b4b4b4; }
.items td.flow { background: #232323; padding: 0 0 0 4px; color: #b0b0b0; border: 0; }
.items td.num { font-size: 31px; padding: 0 0 0 18px; }
.name { display: flex; align-items: center; height: 54px; color: #b0b0b0; }
.name svg { margin-left: 1px; width: 50px; }
.name b { font-weight: 400; flex: 1; height: 54px; line-height: 56px; padding-left: 10px; color: #a8a8a8; }
.sel .name b { background: #9e9e9e; color: #161616; font-weight: 500; }
.sw { width: 30px; height: 32px; border: 2px solid #1c1c1c; }
.projfoot { margin-top: auto; display: flex; align-items: center; height: 51px; border-top: 3px solid #000; color: #b0b0b0; flex: none; }
.f2 { margin-left: 30px; } .f3 { margin-left: 29px; } .f4 { margin-left: 28px; }
.bpc { width: 139px; height: 48px; margin-left: 25px; border: 3px solid #303030; border-radius: 8px; background: #1e1e1e; font-size: 26px; color: #909090; padding-top: 6px; }
.f5 { margin-left: 18px; }
.hscroll { width: 573px; height: 51px; margin: -3px 0 0 24px; padding: 4px 3px 0; background: #1e1e1e; }
.hscroll i { width: 219px; height: 45px; border-radius: 22px; background: #323232; }

.comptabs { display: flex; gap: 110px; height: 78px; padding-left: 33px; flex: none; color: #8c8c8c; font-size: 32px; }
.tab { display: flex; align-items: center; gap: 21px; white-space: nowrap; height: 78px; padding-top: 10px; }
.tab .chip { margin: -10px 14px 0 0; }
.tab.current { border-bottom: 6px solid #b8b8b8; gap: 30px; padding-top: 14px; }
.current .chip { margin: -12px 2px 0 0; }
.current > svg { margin-top: -6px; }
.kind { margin-right: -6px; }
.tab em { color: #2d8ceb; }
.crumbs { height: 83px; padding: 12px 0 0 55px; flex: none; font-size: 32px; }
.crumbs button { height: 54px; padding: 2px 53px 0 28px; background: #161616; border: 3px solid #303030; border-radius: 8px; color: #2d8ceb; }
.viewer { flex: 1; min-height: 0; border-top: 1px solid #000; border-bottom: 2px solid #000; padding: 6px 112px 3px 113px; overflow: hidden; display: flex; background: #232323; }
.canvas { flex: 1; position: relative; background: #000; border-right: 1px solid #8a2c2c; border-bottom: 1px solid #8a2c2c; }
.h { position: absolute; width: 20px; height: 15px; margin: -8px 0 0 -10px; background: #b63838; }
.tl, .ml, .bl { left: 0; } .tc, .bc { left: 50%; } .tr, .mr, .br { left: 100%; }
.tl, .tc, .tr { top: 2px; } .ml, .mr { top: 50%; } .bl, .bc, .br { top: 100%; }
.ml, .mr { height: 20px; margin-top: -10px; }
.anchor { position: absolute; left: 50%; top: 50%; margin: -22px 0 0 -21px; }
.compfoot { display: flex; align-items: center; height: 68px; padding-left: 3px; flex: none; color: #b0b0b0; }
.ic, .box { height: 56px; flex: none; }
.ic svg { margin-bottom: 4px; }
.ic .low { margin-top: 2px; margin-bottom: 0; }
.w62 { width: 64px; } .w66 { width: 66px; } .w208 { width: 209px; } .w260 { width: 262px; } .w316 { width: 316px; }
.box { background: #161616; border: 3px solid #303030; border-radius: 8px; }
.plain { border-color: #161616; margin-left: 2px; }
.box.time { width: 209px; margin-left: 2px; background: #1e1e1e; color: #8a8a8a; font-size: 32px; }
.dim { color: #3c3c3c; }
.gap { margin-left: 8px; } .gap2 { margin-left: 3px; }
.drop { display: grid; align-items: center; flex: none; height: 56px; background: #1e1e1e; border: 3px solid #303030; border-radius: 8px; color: #b4b4b4; font-size: 33px; }
.drop > * { grid-area: 1 / 1; }
.drop select { padding: 2px 0 0 18px; height: 50px; }
.drop svg { justify-self: end; margin: 0 12px 4px 0; pointer-events: none; }

/* right-hand stack */
.side { display: flex; min-height: 0; }
.stack { flex: 1; display: flex; flex-direction: column; min-width: 0; min-height: 0; overflow: hidden; }
.acc { height: 84px; flex: none; margin-bottom: 6px; padding: 3px 0 0 39px; background: #232323; border-right: 2px solid #e8e8e8; color: #8c8c8c; justify-content: flex-start; }
.lib { display: flex; align-items: center; justify-content: space-between; padding-right: 31px; margin: 0; color: #b4b4b4; }
.libctl { background: #272727; padding: 12px 23px 0 25px; height: 258px; flex: none; border-bottom: 3px solid #1d1d1d; color: #eee; }
.libsearch { display: flex; align-items: center; gap: 18px; height: 71px; padding: 0 16px 0 13px; background: #222; border: 3px solid #1c1c1c; font-size: 30px; }
.libsearch ::placeholder { color: #7c7c7c; opacity: 1; font-style: italic; }
.libpick { display: grid; align-items: center; height: 53px; margin-top: 19px; background: #222; font-size: 28px; }
.libpick > * { grid-area: 1 / 1; }
.libpick select { padding-left: 45px; }
.libpick svg { justify-self: end; margin-right: 16px; }
.libview { display: flex; align-items: center; gap: 28px; font-size: 32px; height: 100px; padding: 6px 15px 0 0; }
.libview button { gap: 18px; }
.grow { flex: 1; }
.drops { flex: 1; min-height: 0; overflow: hidden; background: #2c2c2c; display: flex; flex-direction: column; align-items: center; padding-top: 41px; }
.drops p { margin-top: 94px; font-size: 40px; line-height: 54px; color: #c4c4c4; white-space: nowrap; flex: none; }
.vscroll { width: 38px; background: #1c1c1c; padding: 0 3px 0 1px; }
.vscroll i { height: 740px; border-radius: 17px; background: #323232; }

/* timeline */
.timeline { margin-top: 12px; background: #232323; display: flex; flex-direction: column; min-height: 0; border-bottom: 2px solid #bbb; }
.tltabs { display: flex; align-items: center; height: 84px; padding-left: 21px; flex: none; font-size: 32px; }
.tltabs .chip { margin: -6px 35px 0 30px; }
.tltabs h2 { margin-right: 29px; }
.tlmain { flex: 1; min-height: 0; display: grid; grid-template-columns: 1585px minmax(0, 1fr) 48px; border-right: 5px solid #161616; }
.outline { min-width: 0; border-bottom: 3px solid #000; }
.tlctl { display: flex; align-items: center; height: 105px; color: #b0b0b0; }
.clock { width: 305px; padding-left: 20px; color: #2d8ceb; }
.clock strong { display: block; font-size: 46px; line-height: 54px; font-weight: 600; padding-left: 12px; }
.clock small { display: block; font-size: 30px; line-height: 38px; color: #1d5490; }
.tlctl .field { flex: none; width: 676px; height: 60px; margin-bottom: 2px; padding-left: 18px; }
.k1 { margin-left: 46px; } .k2 { margin-left: 49px; } .k3 { margin-left: 35px; } .k4 { margin-left: 57px; }
.lrow { display: grid; grid-template-columns: 45px 46px 46px 54px 97px 99px 390px 412px 351px minmax(0, 1fr); align-items: center; }
.lhead { height: 60px; border-top: 3px solid #000; border-bottom: 3px solid #000; background: #353535; color: #b0b0b0; font-size: 26px; }
.hc { display: flex; align-items: center; height: 34px; padding-left: 16px; }
.n { padding-left: 6px; }
.s { border-right: 3px solid #151515; }
.tagc { padding-left: 41px; }
.dot { width: 21px; height: 21px; border-radius: 50%; background: #b0b0b0; margin-left: 3px; }
.switches { display: grid; grid-template-columns: repeat(8, 39px); gap: 6px; justify-items: center; align-items: center; padding-left: 13px; }
.fx { font: italic 34px/38px "Open Sans", sans-serif; color: #b0b0b0; }
.layer { height: 51px; background: #4b4b4b; border-bottom: 3px solid #1f1f1f; color: #b0b0b0; }
.av { width: 39px; height: 39px; background: #333; display: flex; align-items: center; justify-content: center; }
.twirl { display: flex; align-items: center; gap: 12px; padding-left: 20px; }
.twirl i { width: 36px; height: 36px; }
.idx { padding-left: 19px; font-size: 32px; }
.src { display: flex; align-items: center; gap: 6px; padding-left: 7px; }
.src i { width: 42px; height: 42px; background: #000; }
.src b { flex: 1; height: 48px; line-height: 50px; padding-left: 13px; font-size: 32px; font-weight: 500; background: #9e9e9e; color: #161616; }
.cells { justify-items: stretch; }
.cells i { height: 39px; background: #333; display: flex; justify-content: center; align-items: center; }
.cells .none { background: none; }
.parent { display: flex; align-items: center; gap: 18px; padding-left: 14px; }
.parent .drop { width: 270px; height: 48px; border-radius: 0; }
.parent select { height: 42px; }
.prop { display: flex; align-items: center; height: 51px; background: #272727; border-bottom: 3px solid #1f1f1f; color: #a4a4a4; padding-left: 262px; }
.prop button { width: 531px; gap: 36px; justify-content: flex-start; }
.prop a { color: #2d8ceb; text-decoration: none; }

.tracks { display: flex; flex-direction: column; min-width: 0; position: relative; border-left: 3px solid #111; padding-top: 15px; overflow: hidden; }
.tracks > div { flex: none; padding: 0 24px 0 21px; }
.navig { height: 30px; border-top: 3px solid #000; border-bottom: 3px solid #000; display: flex; background: #1b1b1b; }
.bar { flex: 1; background: #686868; }
.cap { background: #2d8ceb; width: 17px; }
.cap.l { border-radius: 14px 0 0 14px; margin: 0 4px 0 -21px; }
.cap.r { border-radius: 0 14px 14px 0; margin: 0 -21px 0 4px; }
.ruler { display: flex; justify-content: space-between; height: 57px; font-size: 28px; color: #a0a0a0; }
.ruler span { width: 0; display: flex; flex-direction: column; align-items: center; justify-content: space-between; padding-top: 4px; }
.ruler span::after { content: ""; width: 3px; height: 14px; background: #909090; flex: none; }
.ruler b { font-weight: 400; line-height: 36px; white-space: nowrap; }
.ruler .zero b { padding-left: 18px; }
.ruler .zero::after { height: 22px; margin-top: -6px; }
.work { height: 51px; border-top: 3px solid #000; border-bottom: 3px solid #000; display: flex; }
.work .bar { background: #5f5f5f; border-top: 3px solid #727272; }
.cache { height: 12px; border-bottom: 3px solid #000; }
.cache i { height: 9px; background: #12c022; }
.clip { height: 51px; background: #4b4b4b; border-bottom: 3px solid #1f1f1f; border-right: 3px solid #000; }
.items .clip { height: 57px; border-right: 0; }
.tracks > .clip { padding-right: 21px; }
.clip i { height: 48px; background: linear-gradient(#b04c4c, #944040); border: solid #d49292; border-width: 3px 0 0 3px; }
.lane { height: 51px; background: #272727; border-bottom: 3px solid #1f1f1f; }
.lane i { height: 48px; background: #353535; }
.tracks > .empty { flex: 1; padding-bottom: 6px; }
.empty i { height: 100%; background: #303030; }
.tracks > .overlay { position: absolute; inset: 0 24px 0 21px; padding: 0; pointer-events: none; }
.playhead { position: absolute; top: 0; bottom: 0; width: 0; color: #a8a8a8; }
.playhead > * { position: absolute; }
.navmark { top: 18px; left: -4px; width: 9px; height: 24px; border: solid #a0a0a0; border-width: 0 3px; background: #2d8ceb; }
.head { top: 60px; left: -17px; }
.line { top: 102px; bottom: 0; left: -1px; width: 3px; background: #2d8ceb; }
.beam { left: -11px; }
.b1 { top: 225px; } .b2 { top: 276px; }
.gutter { border-right: 2px solid #c0c0c0; color: #b0b0b0; }
.g1 { height: 165px; border-bottom: 3px solid #000; display: flex; align-items: flex-end; justify-content: center; padding: 0 0 9px 4px; }
.g2 { height: 51px; display: flex; align-items: center; justify-content: center; }
.tlfoot { display: flex; align-items: center; height: 47px; flex: none; color: #b0b0b0; border-right: 5px solid #161616; }
.pane { width: 48px; height: 47px; background: #16202b; border: 3px solid #303030; border-left: 0; }
.md { margin-left: 13px; }
.io { margin-left: 18px; }
.toggle { width: 402px; height: 47px; margin-left: 634px; background: #1e1e1e; border: 3px solid #303030; border-radius: 8px; color: #909090; font-size: 32px; }
.hs { margin-left: 419px; }
.tlfoot input { appearance: none; width: 143px; height: 30px; margin: 0 36px 0 32px; background: linear-gradient(#424242, #424242) center / 100% 6px no-repeat; }
.tlfoot input::-webkit-slider-thumb { appearance: none; width: 30px; height: 30px; border-radius: 50%; border: 6px solid #909090; background: #232323; }
```
